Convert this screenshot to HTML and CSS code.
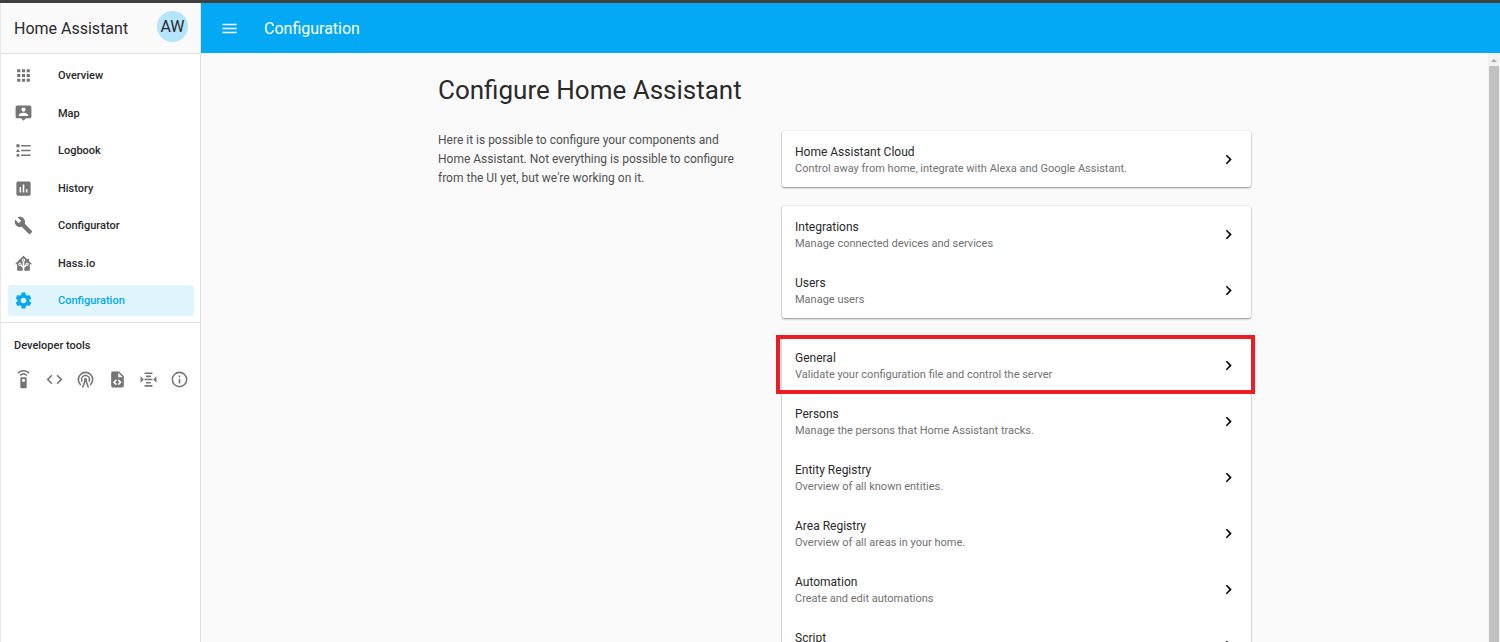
FILE: index.html
```html
<!DOCTYPE html>
<html lang="en">
<head>
  <meta charset="UTF-8">
  <meta name="viewport" content="width=device-width, initial-scale=1.0">
  <title>Home Assistant</title>
  <link rel="stylesheet" href="styles.css">
</head>
<body>
  <svg class="sprite" aria-hidden="true">
    <symbol id="chevron" viewBox="0 0 24 24"><path d="M8.59,16.58L13.17,12L8.59,7.41L10,6L16,12L10,18L8.59,16.58Z"/></symbol>
  </svg>

  <aside class="sidebar">
    <header class="sidebar-header">
      <span class="brand">Home Assistant</span>
      <a class="avatar" href="#profile">AW</a>
    </header>

    <nav class="menu">
      <a class="menu-item" href="#overview">
        <svg class="icon" viewBox="0 0 24 24"><path d="M16,20H20V16H16M16,14H20V10H16M10,8H14V4H10M16,8H20V4H16M10,14H14V10H10M4,14H8V10H4M4,20H8V16H4M10,20H14V16H10M4,8H8V4H4V8Z"/></svg>
        Overview
      </a>
      <a class="menu-item" href="#map">
        <svg class="icon" viewBox="0 0 24 24"><path fill-rule="evenodd" d="M4,2H20A2,2 0 0,1 22,4V16A2,2 0 0,1 20,18H15L12,21L9,18H4A2,2 0 0,1 2,16V4A2,2 0 0,1 4,2ZM12,4.3A2.7,2.7 0 0,0 9.3,7A2.7,2.7 0 0,0 12,9.7A2.7,2.7 0 0,0 14.7,7A2.7,2.7 0 0,0 12,4.3ZM18,15V14.1C18,12.1 14,11 12,11C10,11 6,12.1 6,14.1V15H18Z"/></svg>
        Map
      </a>
      <a class="menu-item" href="#logbook">
        <svg class="icon" viewBox="0 0 24 24"><path d="M5,9.5L7.5,14H2.5L5,9.5M3,4H7V8H3V4M5,20A2,2 0 0,0 7,18A2,2 0 0,0 5,16A2,2 0 0,0 3,18A2,2 0 0,0 5,20M9,5V7H21V5H9M9,19H21V17H9V19M9,13H21V11H9V13Z"/></svg>
        Logbook
      </a>
      <a class="menu-item" href="#history">
        <svg class="icon" viewBox="0 0 24 24"><path fill-rule="evenodd" d="M17,17H15V13H17ZM13,17H11V7H13ZM9,17H7V10H9ZM19,3H5C3.89,3 3,3.89 3,5V19A2,2 0 0,0 5,21H19A2,2 0 0,0 21,19V5C21,3.89 20.1,3 19,3Z"/></svg>
        History
      </a>
      <a class="menu-item" href="#configurator">
        <svg class="icon" viewBox="0 0 24 24"><path d="M22.7,19L13.6,9.9C14.5,7.6 14,4.9 12.1,3C10.1,1 7.1,0.6 4.7,1.7L9,6L6,9L1.6,4.7C0.4,7.1 0.9,10.1 2.9,12.1C4.8,14 7.5,14.5 9.8,13.6L18.9,22.7C19.3,23.1 19.9,23.1 20.3,22.7L22.6,20.4C23.1,20 23.1,19.3 22.7,19Z"/></svg>
        Configurator
      </a>
      <a class="menu-item" href="#hassio">
        <svg class="icon" viewBox="0 0 24 24"><path fill-rule="evenodd" d="M21.8,13H20V21H13V17.67L15.79,14.88L16.5,15C17.66,15 18.6,14.06 18.6,12.9C18.6,11.74 17.66,10.8 16.5,10.8A2.1,2.1 0 0,0 14.4,12.9L14.5,13.61L13,15.13V9.65C13.66,9.29 14.1,8.6 14.1,7.8A2.1,2.1 0 0,0 12,5.7A2.1,2.1 0 0,0 9.9,7.8C9.9,8.6 10.34,9.29 11,9.65V15.13L9.5,13.61L9.6,12.9A2.1,2.1 0 0,0 7.5,10.8A2.1,2.1 0 0,0 5.4,12.9A2.1,2.1 0 0,0 7.5,15L8.21,14.88L11,17.67V21H4V13H2.25C1.83,13 1.42,13 1.42,12.79C1.43,12.57 1.85,12.15 2.28,11.72L11,3C11.33,2.67 11.67,2.33 12,2.33C12.33,2.33 12.67,2.67 13,3L17,7V6H19V9L21.78,11.78C22.18,12.18 22.59,12.59 22.6,12.8C22.6,13 22.2,13 21.8,13M7.5,12A0.9,0.9 0 0,1 8.4,12.9A0.9,0.9 0 0,1 7.5,13.8A0.9,0.9 0 0,1 6.6,12.9A0.9,0.9 0 0,1 7.5,12M16.5,12C17,12 17.4,12.4 17.4,12.9C17.4,13.4 17,13.8 16.5,13.8A0.9,0.9 0 0,1 15.6,12.9A0.9,0.9 0 0,1 16.5,12M12,6.9C12.5,6.9 12.9,7.3 12.9,7.8C12.9,8.3 12.5,8.7 12,8.7C11.5,8.7 11.1,8.3 11.1,7.8C11.1,7.3 11.5,6.9 12,6.9Z"/></svg>
        Hass.io
      </a>
      <a class="menu-item active" href="#config">
        <svg class="icon" viewBox="0 0 24 24"><path d="M12,15.5A3.5,3.5 0 0,1 8.5,12A3.5,3.5 0 0,1 12,8.5A3.5,3.5 0 0,1 15.5,12A3.5,3.5 0 0,1 12,15.5M19.43,12.97C19.47,12.65 19.5,12.33 19.5,12C19.5,11.67 19.47,11.34 19.43,11L21.54,9.37C21.73,9.22 21.78,8.95 21.66,8.73L19.66,5.27C19.54,5.05 19.27,4.96 19.05,5.05L16.56,6.05C16.04,5.66 15.5,5.32 14.87,5.07L14.5,2.42C14.46,2.18 14.25,2 14,2H10C9.75,2 9.54,2.18 9.5,2.42L9.13,5.07C8.5,5.32 7.96,5.66 7.44,6.05L4.95,5.05C4.73,4.96 4.46,5.05 4.34,5.27L2.34,8.73C2.21,8.95 2.27,9.22 2.46,9.37L4.57,11C4.53,11.34 4.5,11.67 4.5,12C4.5,12.33 4.53,12.65 4.57,12.97L2.46,14.63C2.27,14.78 2.21,15.05 2.34,15.27L4.34,18.73C4.46,18.95 4.73,19.03 4.95,18.95L7.44,17.94C7.96,18.34 8.5,18.68 9.13,18.93L9.5,21.58C9.54,21.82 9.75,22 10,22H14C14.25,22 14.46,21.82 14.5,21.58L14.87,18.93C15.5,18.67 16.04,18.34 16.56,17.94L19.05,18.95C19.27,19.03 19.54,18.95 19.66,18.73L21.66,15.27C21.78,15.05 21.73,14.78 21.54,14.63L19.43,12.97Z"/></svg>
        Configuration
      </a>
    </nav>

    <section class="dev-tools">
      <h2 class="dev-title">Developer tools</h2>
      <div class="dev-icons">
        <a class="dev-link" href="#services" aria-label="Services">
          <svg class="icon" viewBox="0 0 24 24"><path fill-rule="evenodd" d="M12,0C8.96,0 6.21,1.23 4.22,3.22L5.63,4.63C7.26,3 9.5,2 12,2C14.5,2 16.74,3 18.36,4.64L19.77,3.23C17.79,1.23 15.04,0 12,0M7.05,6.05L8.46,7.46C9.37,6.56 10.62,6 12,6C13.38,6 14.63,6.56 15.54,7.46L16.95,6.05C15.68,4.78 13.93,4 12,4C10.07,4 8.32,4.78 7.05,6.05M12,15A2,2 0 0,1 10,13A2,2 0 0,1 12,11A2,2 0 0,1 14,13A2,2 0 0,1 12,15M15,9H9A1,1 0 0,0 8,10V22A1,1 0 0,0 9,23H15A1,1 0 0,0 16,22V10A1,1 0 0,0 15,9Z"/></svg>
        </a>
        <a class="dev-link" href="#states" aria-label="States">
          <svg class="icon" viewBox="0 0 24 24"><path d="M14.6,16.6L19.2,12L14.6,7.4L16,6L22,12L16,18L14.6,16.6M9.4,16.6L4.8,12L9.4,7.4L8,6L2,12L8,18L9.4,16.6Z"/></svg>
        </a>
        <a class="dev-link" href="#events" aria-label="Events">
          <svg class="icon" viewBox="0 0 24 24"><path d="M12,10A2,2 0 0,1 14,12C14,12.5 13.82,12.94 13.53,13.29L16.7,22H14.57L12,14.93L9.43,22H7.3L10.47,13.29C10.18,12.94 10,12.5 10,12A2,2 0 0,1 12,10M12,8A4,4 0 0,0 8,12C8,12.5 8.1,13 8.28,13.46L7.4,15.86C6.53,14.81 6,13.47 6,12A6,6 0 0,1 12,6A6,6 0 0,1 18,12C18,13.47 17.47,14.81 16.6,15.86L15.72,13.46C15.9,13 16,12.5 16,12A4,4 0 0,0 12,8M12,4A8,8 0 0,0 4,12C4,14.36 5,16.5 6.64,17.94L5.92,19.94C3.54,18.11 2,15.23 2,12A10,10 0 0,1 12,2A10,10 0 0,1 22,12C22,15.23 20.46,18.11 18.08,19.94L17.36,17.94C19,16.5 20,14.36 20,12A8,8 0 0,0 12,4Z"/></svg>
        </a>
        <a class="dev-link" href="#templates" aria-label="Templates">
          <svg class="icon" viewBox="0 0 24 24"><path fill-rule="evenodd" d="M13,9H18.5L13,3.5V9M6,2H14L20,8V20A2,2 0 0,1 18,22H6C4.89,22 4,21.1 4,20V4C4,2.89 4.89,2 6,2M6.12,15.5L9.86,19.24L11.28,17.83L8.95,15.5L11.28,13.17L9.86,11.76L6.12,15.5M17.28,15.5L13.54,11.76L12.12,13.17L14.45,15.5L12.12,17.83L13.54,19.24L17.28,15.5Z"/></svg>
        </a>
        <a class="dev-link" href="#mqtt" aria-label="MQTT">
          <svg class="icon" viewBox="0 0 24 24"><path d="M7,3V5H17V3H7M9,7V9H15V7H9M2,7.96V16.04L6.03,12L2,7.96M22.03,7.96L18,12L22.03,16.04V7.96M7,11V13H17V11H7M9,15V17H15V15H9M7,19V21H17V19H7Z"/></svg>
        </a>
        <a class="dev-link" href="#info" aria-label="Info">
          <svg class="icon" viewBox="0 0 24 24"><path d="M11,9H13V7H11M12,20C7.59,20 4,16.41 4,12C4,7.59 7.59,4 12,4C16.41,4 20,7.59 20,12C20,16.41 16.41,20 12,20M12,2A10,10 0 0,0 2,12A10,10 0 0,0 12,22A10,10 0 0,0 22,12A10,10 0 0,0 12,2M11,17H13V11H11V17Z"/></svg>
        </a>
      </div>
    </section>
  </aside>

  <div class="main">
    <header class="toolbar">
      <button class="menu-button" type="button" aria-label="Toggle menu">
        <svg class="icon" viewBox="0 0 24 24"><path d="M3,6H21V8H3V6M3,11H21V13H3V11M3,16H21V18H3V16Z"/></svg>
      </button>
      <span class="toolbar-title">Configuration</span>
    </header>

    <div class="view">
      <main class="content">
        <h1 class="heading">Configure Home Assistant</h1>
        <div class="columns">
          <p class="intro">Here it is possible to configure your components and Home Assistant. Not everything is possible to configure from the UI yet, but we're working on it.</p>

          <div class="cards">
            <div class="card">
              <a class="row" href="#cloud">
                <span class="row-body">
                  <span class="row-title">Home Assistant Cloud</span>
                  <span class="row-text">Control away from home, integrate with Alexa and Google Assistant.</span>
                </span>
                <svg class="icon"><use href="#chevron"/></svg>
              </a>
            </div>

            <div class="card">
              <a class="row" href="#integrations">
                <span class="row-body">
                  <span class="row-title">Integrations</span>
                  <span class="row-text">Manage connected devices and services</span>
                </span>
                <svg class="icon"><use href="#chevron"/></svg>
              </a>
              <a class="row" href="#users">
                <span class="row-body">
                  <span class="row-title">Users</span>
                  <span class="row-text">Manage users</span>
                </span>
                <svg class="icon"><use href="#chevron"/></svg>
              </a>
            </div>

            <div class="card">
              <a class="row marked" href="#general">
                <span class="row-body">
                  <span class="row-title">General</span>
                  <span class="row-text">Validate your configuration file and control the server</span>
                </span>
                <svg class="icon"><use href="#chevron"/></svg>
              </a>
              <a class="row" href="#persons">
                <span class="row-body">
                  <span class="row-title">Persons</span>
                  <span class="row-text">Manage the persons that Home Assistant tracks.</span>
                </span>
                <svg class="icon"><use href="#chevron"/></svg>
              </a>
              <a class="row" href="#entities">
                <span class="row-body">
                  <span class="row-title">Entity Registry</span>
                  <span class="row-text">Overview of all known entities.</span>
                </span>
                <svg class="icon"><use href="#chevron"/></svg>
              </a>
              <a class="row" href="#areas">
                <span class="row-body">
                  <span class="row-title">Area Registry</span>
                  <span class="row-text">Overview of all areas in your home.</span>
                </span>
                <svg class="icon"><use href="#chevron"/></svg>
              </a>
              <a class="row" href="#automation">
                <span class="row-body">
                  <span class="row-title">Automation</span>
                  <span class="row-text">Create and edit automations</span>
                </span>
                <svg class="icon"><use href="#chevron"/></svg>
              </a>
              <a class="row" href="#script">
                <span class="row-body">
                  <span class="row-title">Script</span>
                  <span class="row-text">Create and edit scripts</span>
                </span>
                <svg class="icon"><use href="#chevron"/></svg>
              </a>
            </div>
          </div>
        </div>
      </main>

      <div class="scrollbar" aria-hidden="true">
        <svg class="scroll-arrow" viewBox="0 0 12 13"><path d="M3,9L6,6L9,9Z"/></svg>
        <div class="scroll-thumb"></div>
      </div>
    </div>
  </div>
</body>
</html>
```
FILE: styles.css
```css
* {
  box-sizing: border-box;
  margin: 0;
  padding: 0;
}

body {
  display: flex;
  height: 100vh;
  overflow: hidden;
  border-top: 3px solid #404040;
  background: #fafafa;
  font-family: Roboto, "Noto Sans", sans-serif;
  color: #2a2a2a;
}

a {
  color: inherit;
  text-decoration: none;
}

.sprite {
  display: none;
}

.icon {
  flex: none;
  width: 19px;
  height: 19px;
  fill: currentColor;
}

/* Sidebar */

.sidebar {
  flex: none;
  width: 201px;
  background: #fff;
  border-left: 1px solid #e8e8e8;
  border-right: 1px solid #e0e0e0;
}

.sidebar-header {
  display: flex;
  align-items: center;
  justify-content: space-between;
  height: 51px;
  padding: 0 12px 0 13px;
  background: #fafafa;
  border-bottom: 1px solid #e0e0e0;
}

.brand {
  font-size: 16px;
}

.avatar {
  width: 31px;
  height: 31px;
  margin-bottom: 3px;
  border-radius: 50%;
  background: #b3e5fc;
  font-size: 16px;
  line-height: 31px;
  text-align: center;
}

.menu {
  display: flex;
  flex-direction: column;
  justify-content: space-between;
  height: 269px;
  padding: 6px 6px 6px 7px;
  border-bottom: 1px solid #e0e0e0;
}

.menu-item {
  display: flex;
  align-items: center;
  gap: 25px;
  height: 31px;
  padding: 0 6px;
  border-radius: 3px;
  font-size: 11px;
  font-weight: 500;
}

.menu-item .icon {
  color: #757575;
}

.menu-item.active {
  background: #e1f5fe;
  color: #03a9f4;
}

.menu-item.active .icon {
  color: #03a9f4;
}

.dev-tools {
  padding: 15px 11px 0 13px;
}

.dev-title {
  font-size: 11px;
  font-weight: 500;
  line-height: 16px;
}

.dev-icons {
  display: flex;
  justify-content: space-between;
  margin-top: 16px;
  color: #757575;
}

.dev-link {
  display: flex;
}

/* Main area */

.main {
  display: flex;
  flex: 1;
  flex-direction: column;
  min-width: 0;
}

.toolbar {
  display: flex;
  flex: none;
  align-items: center;
  gap: 25px;
  height: 50px;
  padding: 0 19px;
  background: #03a9f4;
  color: #fff;
}

.menu-button {
  display: flex;
  border: none;
  background: none;
  color: inherit;
  cursor: pointer;
}

.toolbar-title {
  font-size: 16px;
}

.view {
  display: flex;
  flex: 1;
  min-height: 0;
}

.content {
  flex: 1;
  min-width: 0;
  overflow: hidden;
  padding: 20px 24px;
}

.heading,
.columns {
  max-width: 813px;
  margin: 0 auto;
}

.heading {
  font-size: 26px;
  font-weight: 400;
  line-height: 34px;
}

.columns {
  display: flex;
  gap: 32px;
  margin-top: 24px;
}

.intro {
  flex: 1;
  font-size: 12px;
  line-height: 19px;
  color: #505050;
}

.cards {
  display: flex;
  flex: none;
  flex-direction: column;
  gap: 19px;
  width: 469px;
}

.card {
  border-radius: 2px;
  background: #fff;
  box-shadow: 0 1px 2px rgba(0, 0, 0, 0.4), 0 0 2px rgba(0, 0, 0, 0.12);
}

.row {
  display: flex;
  align-items: center;
  justify-content: space-between;
  height: 56px;
  padding: 0 13px;
}

.row-body {
  display: flex;
  flex-direction: column;
  padding-top: 1px;
}

.row-title {
  font-size: 12px;
  line-height: 18px;
}

.row-text {
  font-size: 11px;
  line-height: 16px;
  color: #727272;
}

.row .icon {
  color: #000;
}

/* Red frame round the highlighted row */
.marked {
  position: relative;
}

.marked::after {
  content: "";
  position: absolute;
  inset: -2px -4px -1px -6px;
  border: 4px solid #ed1c24;
}

.scrollbar {
  display: flex;
  flex: none;
  flex-direction: column;
  width: 12px;
  background: #f1f1f1;
}

.scroll-arrow {
  flex: none;
  width: 12px;
  height: 13px;
  fill: #a3a3a3;
}

.scroll-thumb {
  flex: 1;
  margin: 0 1px;
  background: #c1c1c1;
}
```
